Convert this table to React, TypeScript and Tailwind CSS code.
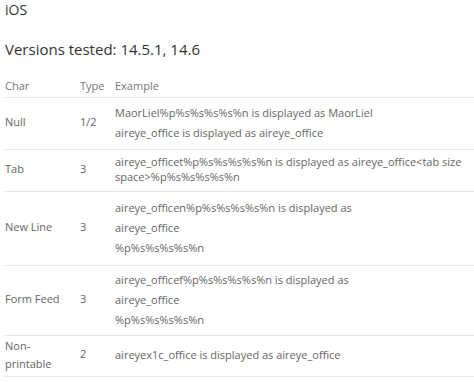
import React from "react";

type Row = {
  char: string[];
  type: string;
  example: string[];
  h: string;
};

const rows: Row[] = [
  {
    char: ["Null"],
    type: "1/2",
    example: [
      "MaorLiel%p%s%s%s%s%n is displayed as MaorLiel",
      "aireye_office is displayed as aireye_office",
    ],
    h: "h-[52px]",
  },
  {
    char: ["Tab"],
    type: "3",
    example: [
      "aireye_officet%p%s%s%s%s%n is displayed as aireye_office<tab size space>%p%s%s%s%s%n",
    ],
    h: "h-[42px]",
  },
  {
    char: ["New Line"],
    type: "3",
    example: [
      "aireye_officen%p%s%s%s%s%n is displayed as",
      "aireye_office",
      "%p%s%s%s%s%n",
    ],
    h: "h-[74px]",
  },
  {
    char: ["Form Feed"],
    type: "3",
    example: [
      "aireye_officef%p%s%s%s%s%n is displayed as",
      "aireye_office",
      "%p%s%s%s%s%n",
    ],
    h: "h-[70px]",
  },
  {
    char: ["Non-", "printable"],
    type: "2",
    example: ["aireyex1c_office is displayed as aireye_office"],
    h: "h-[41px]",
  },
];

export default function App() {
  return (
    <div className="w-[474px] h-[382px] overflow-hidden bg-white pl-[5px] font-['Open_Sans',sans-serif]">
      <h3 className="text-[14px] leading-[20px] text-[#333]">iOS</h3>
      <h4 className="mt-[18px] text-[15px] leading-[22px] text-[#333]">
        Versions tested: 14.5.1, 14.6
      </h4>

      {/* table */}
      <div className="mt-[14px] text-[11px] text-[#666]">
        <div className="grid grid-cols-[75px_35px_1fr] items-center h-[24px] pt-[1px] border-b border-[#e6e6e6] text-[#777]">
          <span>Char</span>
          <span>Type</span>
          <span>Example</span>
        </div>

        {rows.map((row, i) => (
          <div
            key={i}
            className={`grid grid-cols-[75px_35px_1fr] items-center pb-[3px] border-b border-[#e6e6e6] ${row.h}`}
          >
            <div className="leading-[18px]">
              {row.char.map((c) => (
                <div key={c}>{c}</div>
              ))}
            </div>
            <div>{row.type}</div>
            <div className="flex flex-col gap-[5px] pr-2 leading-[15px]">
              {row.example.map((e, j) => (
                <p key={j}>{e}</p>
              ))}
            </div>
          </div>
        ))}
      </div>
    </div>
  );
}
